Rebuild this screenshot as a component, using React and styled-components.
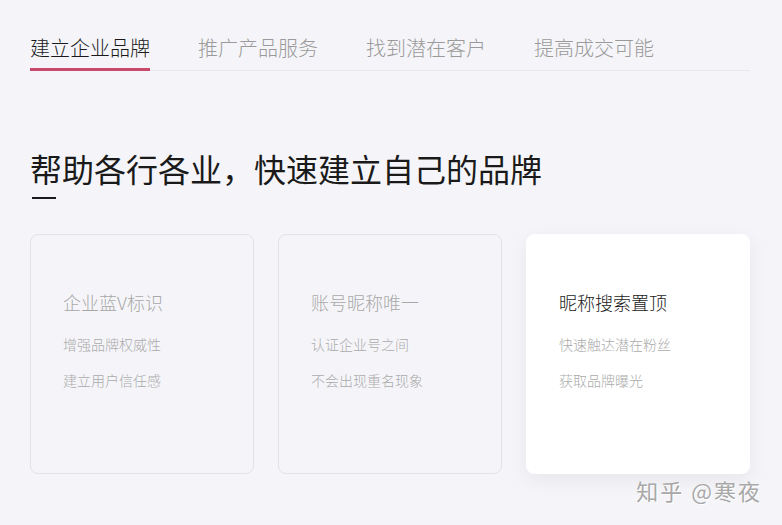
import styled, { createGlobalStyle } from "styled-components";

const GlobalStyle = createGlobalStyle`
  html, body {
    margin: 0;
    padding: 0;
    background: #f5f5f9;
  }
  body {
    font-family: "Noto Sans CJK SC", "Noto Sans", sans-serif;
  }
`;

const tabs = ["建立企业品牌", "推广产品服务", "找到潜在客户", "提高成交可能"];

const cards = [
  { title: "企业蓝V标识", lines: ["增强品牌权威性", "建立用户信任感"] },
  { title: "账号昵称唯一", lines: ["认证企业号之间", "不会出现重名现象"] },
  { title: "昵称搜索置顶", lines: ["快速触达潜在粉丝", "获取品牌曝光"], active: true },
];

const App = () => {
  return (
    <Page>
      <GlobalStyle />
      <TabBar>
        {tabs.map((t, i) => (
          <Tab key={t} $active={i === 0}>
            {t}
          </Tab>
        ))}
      </TabBar>

      <Heading>帮助各行各业，快速建立自己的品牌</Heading>
      <Dash />

      <CardRow>
        {cards.map((c) => (
          <Card key={c.title} $active={c.active}>
            <CardTitle $active={c.active}>{c.title}</CardTitle>
            {c.lines.map((l) => (
              <CardLine key={l}>{l}</CardLine>
            ))}
          </Card>
        ))}
      </CardRow>

      <Watermark>知乎 @寒夜</Watermark>
    </Page>
  );
};

const Page = styled.div`
  position: relative;
  width: 782px;
  height: 525px;
  padding: 0 30px;
  box-sizing: border-box;
  overflow: hidden;
`;

const TabBar = styled.div`
  display: flex;
  gap: 48px;
  width: 720px;
  padding-top: 34px;
  border-bottom: 1px solid #e6e6ec;
`;

const Tab = styled.div`
  width: 120px;
  height: 37px;
  box-sizing: border-box;
  font-size: 20px;
  line-height: 28px;
  font-weight: 300;
  color: ${(p) => (p.$active ? "#1a1a1a" : "#9a9a9a")};
  border-bottom: 3px solid ${(p) => (p.$active ? "#c9496c" : "transparent")};
  margin-bottom: -1px;
  white-space: nowrap;
`;

const Heading = styled.h1`
  margin: 75px 0 0;
  font-size: 32px;
  line-height: 44px;
  font-weight: 400;
  color: #1a1a1a;
  white-space: nowrap;
`;

const Dash = styled.div`
  width: 24px;
  height: 2px;
  margin: 7px 0 0 2px;
  background: #1a1a1a;
`;

const CardRow = styled.div`
  display: flex;
  gap: 24px;
  margin-top: 35px;
`;

const Card = styled.div`
  width: 224px;
  height: 240px;
  box-sizing: border-box;
  padding: 55px 0 0 32px;
  border-radius: 8px;
  background: ${(p) => (p.$active ? "#ffffff" : "#f5f5f9")};
  border: 1px solid ${(p) => (p.$active ? "#ffffff" : "#e2e2e8")};
  box-shadow: ${(p) => (p.$active ? "0 6px 20px rgba(0, 0, 0, 0.06)" : "none")};
`;

const CardTitle = styled.div`
  font-size: 18px;
  line-height: 24px;
  font-weight: 300;
  color: ${(p) => (p.$active ? "#1a1a1a" : "#a8a8a8")};
  margin-bottom: 21px;
`;

const CardLine = styled.div`
  font-size: 14px;
  line-height: 18px;
  font-weight: 300;
  color: #ababab;
  margin-bottom: 18px;
`;

const Watermark = styled.div`
  position: absolute;
  right: 20px;
  bottom: 19px;
  font-size: 22px;
  letter-spacing: 2px;
  color: #a8a8a8;
  text-shadow: 1px 1px 0 #ffffff;
`;

export default App;
